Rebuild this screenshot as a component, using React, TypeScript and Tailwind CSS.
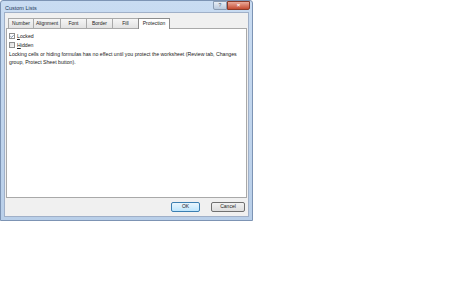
import { Check } from 'lucide-react';

const tabs = [
  { label: 'Number', w: 'w-[26px]' },
  { label: 'Alignment', w: 'w-[28px]' },
  { label: 'Font', w: 'w-[27px]' },
  { label: 'Border', w: 'w-[27px]' },
  { label: 'Fill', w: 'w-[27px]' },
];

export default function App() {
  return (
    <div className="w-[474px] h-[296px] bg-white relative" style={{ fontFamily: '"Liberation Sans", Arial, sans-serif' }}>
      {/* Dialog window */}
      <div className="w-[253px] h-[221px] flex flex-col bg-gradient-to-b from-[#c9dcf2] to-[#b9cfe9] border border-[#7d94b4] rounded-t-[3px]">
        {/* Title bar */}
        <div className="h-[11px] flex items-start justify-between pl-[4px] pr-[2px]">
          <span className="text-[5.5px] text-[#1e395b] mt-[3px]">Custom Lists</span>
          <div className="flex">
            <div className="w-[14px] h-[9px] flex items-center justify-center bg-gradient-to-b from-[#e8eef6] to-[#b9c9dd] border border-[#8a9cb3] rounded-bl-[2px] text-[5px] text-[#4a5a70]">?</div>
            <div className="w-[23px] h-[9px] flex items-center justify-center bg-gradient-to-b from-[#e9a99a] to-[#c44a30] border border-[#8a3b2a] rounded-br-[2px] text-[6px] text-white font-bold">×</div>
          </div>
        </div>

        {/* Client area */}
        <div className="flex-1 mx-[3px] mb-[3px] bg-[#f0f0f0] border border-[#a0b0c8] flex flex-col">
          <div className="flex-1 flex flex-col px-[1px] pt-[4px]">
            {/* Tabs */}
            <div className="flex items-end h-[11px] pl-[2px] text-[5px] text-[#222]">
              {tabs.map((t) => (
                <div key={t.label} className={`${t.w} h-[10px] flex items-center justify-center border border-b-0 border-[#a9a9a9] bg-gradient-to-b from-[#f6f6f6] to-[#e2e2e2] -mr-px`}>
                  {t.label}
                </div>
              ))}
              <div className="w-[32px] h-[11px] flex items-center justify-center border border-b-0 border-[#8c8c8c] bg-white relative top-px z-10">
                Protection
              </div>
            </div>
            {/* Panel */}
            <div className="flex-1 bg-white border border-[#a9a9a9] px-[2px] pt-[3px] text-[5.2px] text-[#222] leading-[8px]">
              <div className="flex items-center gap-[2px] h-[8px]">
                <div className="w-[6px] h-[6px] border border-[#8e8f8f] bg-white flex items-center justify-center">
                  <Check className="w-[5px] h-[5px] text-[#2c4a74]" strokeWidth={4} />
                </div>
                <span><span className="underline">L</span>ocked</span>
              </div>
              <div className="flex items-center gap-[2px] h-[8px] mt-[1px]">
                <div className="w-[6px] h-[6px] border border-[#8e8f8f] bg-gradient-to-br from-[#dcdcdc] to-[#f6f6f6]" />
                <span><span className="underline">H</span>idden</span>
              </div>
              <p className="mt-[1px] pr-[4px]">
                Locking cells or hiding formulas has no effect until you protect the worksheet (Review tab, Changes group, Protect Sheet button).
              </p>
            </div>
          </div>
          {/* Buttons */}
          <div className="h-[18px] flex items-center justify-end gap-[11px] pr-[3px]">
            <button className="w-[29px] h-[10px] text-[5px] text-[#222] rounded-[2px] border border-[#3c7fb1] bg-gradient-to-b from-[#eaf6fd] to-[#bee6fd]">OK</button>
            <button className="w-[34px] h-[10px] text-[5px] text-[#222] rounded-[2px] border border-[#707070] bg-gradient-to-b from-[#f2f2f2] to-[#dddddd]">Cancel</button>
          </div>
        </div>
      </div>
    </div>
  );
}
